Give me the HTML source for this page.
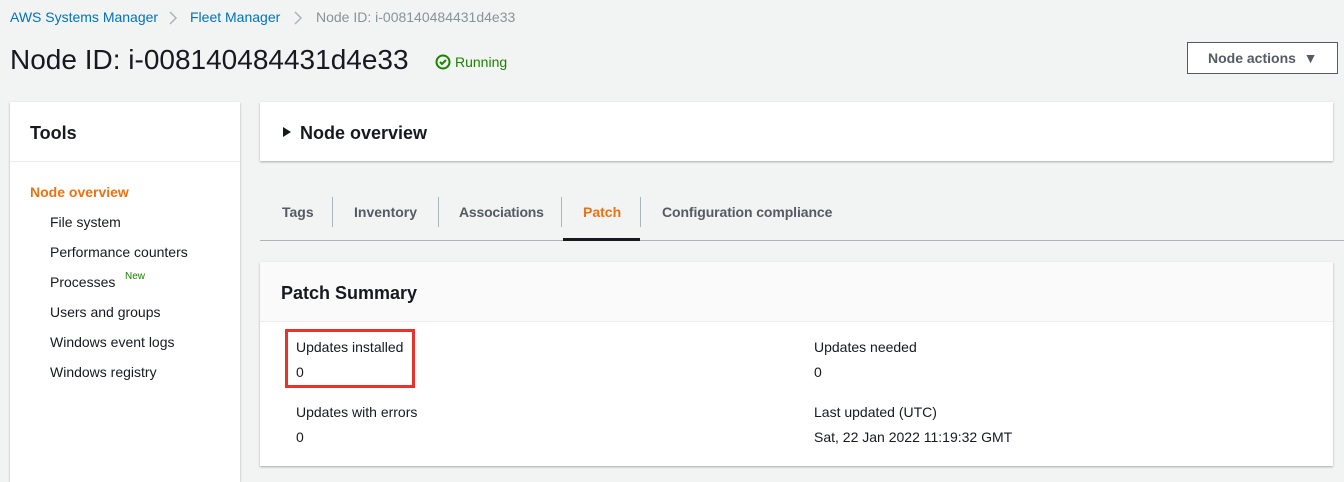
<!DOCTYPE html><html><head><style>
body{margin:0;width:1344px;height:477px;background:#f2f3f3;font-family:"Liberation Sans",sans-serif;position:relative;overflow:hidden;color:#16191f}
.a{position:absolute}
.t{font-size:14px}
</style></head><body>
<div class="a t" style="left:10px;top:9px;color:#0073bb">AWS Systems Manager</div>
<svg class="a" style="left:168px;top:11px" width="10" height="14"><path d="M2 1l6 6-6 6" fill="none" stroke="#aab7b8" stroke-width="1.5"/></svg>
<div class="a t" style="left:190px;top:9px;color:#0073bb">Fleet Manager</div>
<svg class="a" style="left:293px;top:11px" width="10" height="14"><path d="M2 1l6 6-6 6" fill="none" stroke="#aab7b8" stroke-width="1.5"/></svg>
<div class="a t" style="left:316px;top:9px;color:#879596">Node ID: i-008140484431d4e33</div>
<div class="a" style="left:10px;top:44px;font-size:28px">Node ID: i-008140484431d4e33</div>
<svg class="a" style="left:435px;top:54px" width="16" height="16"><circle cx="8" cy="8" r="6.5" fill="none" stroke="#1d8102" stroke-width="2"/><path d="M5 8l2 2 4-4" fill="none" stroke="#1d8102" stroke-width="2"/></svg>
<div class="a t" style="left:455px;top:54px;color:#1d8102">Running</div>
<div class="a" style="left:1187px;top:42px;width:151px;height:32px;border:1px solid #545b64;background:#fff;box-sizing:border-box;font-size:14px;font-weight:bold;color:#545b64;line-height:30px;text-indent:20px">Node actions &nbsp;▼</div>
<div class="a" style="left:10px;top:102px;width:230px;height:380px;background:#fff;box-shadow:0 1px 2px #aaa"></div>
<div class="a" style="left:10px;top:161px;width:230px;height:1px;background:#eaeded"></div>
<div class="a" style="left:30px;top:123px;font-size:18px;font-weight:bold">Tools</div>
<div class="a t" style="left:30px;top:184px;color:#ec7211;font-weight:bold">Node overview</div>
<div class="a t" style="left:50px;top:214px">File system</div>
<div class="a t" style="left:50px;top:244px">Performance counters</div>
<div class="a t" style="left:50px;top:274px">Processes</div>
<div class="a" style="left:125px;top:271px;font-size:10px;color:#1d8102">New</div>
<div class="a t" style="left:50px;top:304px">Users and groups</div>
<div class="a t" style="left:50px;top:334px">Windows event logs</div>
<div class="a t" style="left:50px;top:364px">Windows registry</div>
<div class="a" style="left:260px;top:102px;width:1073px;height:59px;background:#fff;box-shadow:0 1px 2px #aaa"></div>
<svg class="a" style="left:283px;top:127px" width="8" height="10"><path d="M0 0l8 5-8 5z" fill="#16191f"/></svg>
<div class="a" style="left:300px;top:123px;font-size:18px;font-weight:bold">Node overview</div>
<div class="a" style="left:260px;top:240px;width:1084px;height:1px;background:#aab7b8"></div>
<div class="a t" style="left:282px;top:204px;font-weight:bold;color:#545b64">Tags</div>
<div class="a" style="left:332px;top:197px;width:1px;height:30px;background:#aab7b8"></div>
<div class="a t" style="left:354px;top:204px;font-weight:bold;color:#545b64">Inventory</div>
<div class="a" style="left:438px;top:197px;width:1px;height:30px;background:#aab7b8"></div>
<div class="a t" style="left:459px;top:204px;font-weight:bold;color:#545b64;letter-spacing:-0.2px">Associations</div>
<div class="a" style="left:561px;top:197px;width:1px;height:30px;background:#aab7b8"></div>
<div class="a t" style="left:583px;top:204px;font-weight:bold;color:#ec7211">Patch</div>
<div class="a" style="left:640px;top:197px;width:1px;height:30px;background:#aab7b8"></div>
<div class="a" style="left:563px;top:238px;width:77px;height:3px;background:#16191f"></div>
<div class="a t" style="left:662px;top:204px;font-weight:bold;color:#545b64;letter-spacing:-0.1px">Configuration compliance</div>
<div class="a" style="left:260px;top:262px;width:1073px;height:204px;background:#fff;box-shadow:0 1px 2px #aaa"></div>
<div class="a" style="left:260px;top:262px;width:1073px;height:59px;background:#fafafa;border-bottom:1px solid #eaeded"></div>
<div class="a" style="left:281px;top:283px;font-size:18px;font-weight:bold">Patch Summary</div>
<div class="a" style="left:285px;top:329px;width:130px;height:59px;border:3px solid #e8322b;box-sizing:border-box"></div>
<div class="a t" style="left:296px;top:339px">Updates installed</div>
<div class="a t" style="left:296px;top:364px">0</div>
<div class="a t" style="left:814px;top:339px">Updates needed</div>
<div class="a t" style="left:814px;top:364px">0</div>
<div class="a t" style="left:296px;top:404px">Updates with errors</div>
<div class="a t" style="left:296px;top:429px">0</div>
<div class="a t" style="left:814px;top:404px">Last updated (UTC)</div>
<div class="a t" style="left:814px;top:429px">Sat, 22 Jan 2022 11:19:32 GMT</div>
</body></html>
